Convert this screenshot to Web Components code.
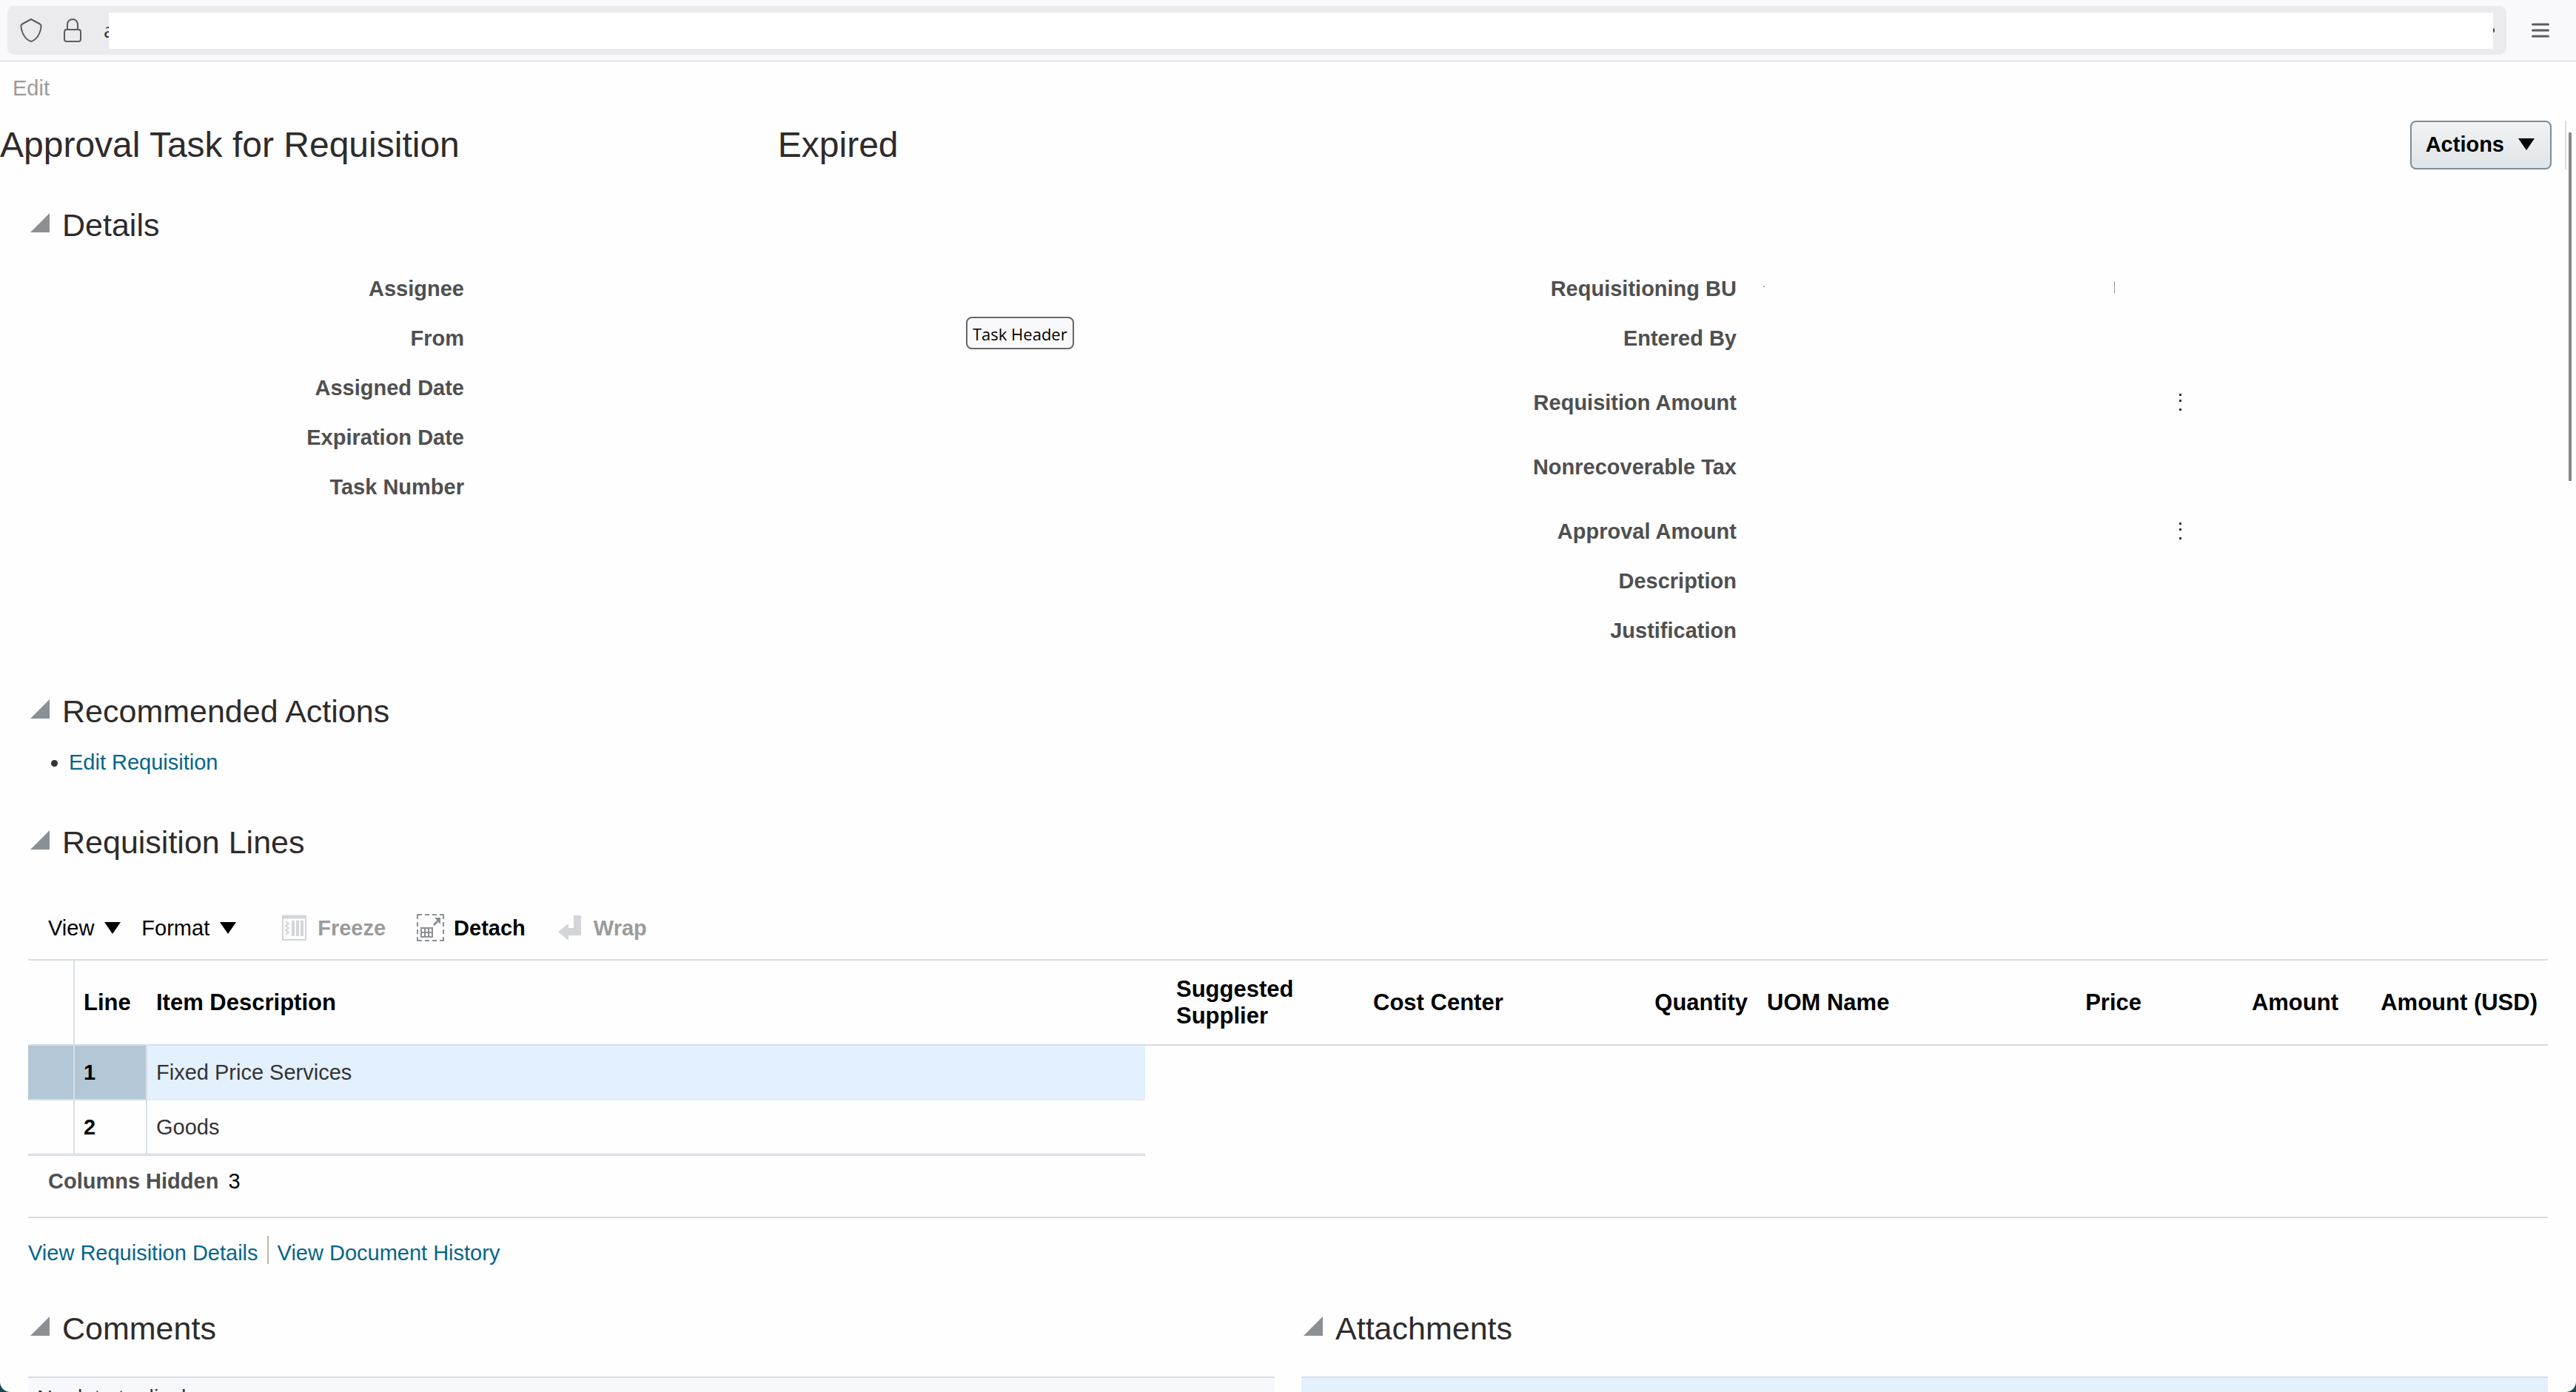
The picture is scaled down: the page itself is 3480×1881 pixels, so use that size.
<!DOCTYPE html>
<html lang="en">
<head>
<meta charset="utf-8">
<title>Approval Task for Requisition</title>
<style>
	html {
		height: 100%;
		background: #17474f;
	}
	body {
		margin: 0;
		height: 100%;
		font: 29px/36px "Liberation Sans", Arial, sans-serif;
		color: #333;
	}
</style>
</head>
<body>
<approval-page></approval-page>

<script>
/**
 * Small helper: attaches an open shadow root with styles and markup
 */
class BaseElement extends HTMLElement {
	render(html) {
		this.attachShadow({ mode: 'open' }).innerHTML = `
			<style>
				* { box-sizing: border-box; }
				button, input { font: inherit; color: inherit; margin: 0; padding: 0; border: none; background: none; }
				a { color: #06658a; text-decoration: none; }
			</style>
			${html}
		`;
	}
}

/**
 * Browser toolbar with the address field
 */
class BrowserBar extends BaseElement {
	connectedCallback() {
		this.render(`
			<style>
				:host {
					display: flex;
					align-items: center;
					gap: 34px;
					height: 83px;
					box-sizing: border-box;
					padding: 0 36px 0 10px;
					background: #f9f9fb;
					border-bottom: 1px solid #c9c9cd;
				}
				.field {
					flex: 1;
					display: flex;
					align-items: center;
					height: 66px;
					padding: 0 16px 0 17px;
					background: #ebebed;
					border-radius: 9px;
				}
				.lock { margin: 0 29px 0 28px; }
				.start {
					width: 7px;
					white-space: nowrap;
					font: 27px/36px "Open Sans", sans-serif;
				}
				/* the field lies over the end of the address */
				input {
					position: relative;
					flex: 1;
					height: 49px;
					background: #fff;
				}
				.end {
					width: 2px;
					height: 6px;
					background: #4a4a50;
					border-radius: 0 2px 2px 0;
				}
				svg { display: block; }
			</style>
			<div class="field">
				<svg width="30" height="34" viewBox="0 0 30 34" fill="none" stroke="#5b5b60" stroke-width="2" stroke-linejoin="round">
					<path d="M15 2 L27 8.500 Q29 9.500 28.500 12 C27.500 22 22 30 15 32 C8 30 2.500 22 1.500 12 Q1 9.500 3 8.500 Z"/>
				</svg>
				<svg class="lock" width="26" height="34" viewBox="0 0 26 34" fill="none" stroke="#5b5b60" stroke-width="2">
					<rect x="2" y="16" width="22" height="16" rx="3"/>
					<path d="M6 16 V9 a7 7 0 0 1 14 0 V16"/>
				</svg>
				<span class="start">a</span>
				<input type="text" aria-label="Address">
				<span class="end"></span>
			</div>
			<button aria-label="Open application menu">
				<svg width="24" height="20" viewBox="0 0 24 20" stroke="#5b5b60" stroke-width="3" stroke-linecap="round">
					<path d="M1.500 2 H22.500 M1.500 10 H22.500 M1.500 18 H22.500"/>
				</svg>
			</button>
		`);
	}
}

/**
 * Page title row with status and the actions slot
 */
class PageTitle extends BaseElement {
	connectedCallback() {
		this.render(`
			<style>
				:host {
					display: flex;
					align-items: center;
					height: 82px;
				}
				h1 {
					flex: 1;
					display: flex;
					gap: 430px;
					margin: 0;
					font-size: 48px;
					font-weight: normal;
					line-height: 56px;
					color: #2f2b2a;
				}
				.edge {
					width: 2px;
					height: 66px;
					margin: 0 13px 0 18px;
					background: #d6dfe6;
				}
			</style>
			<h1><span>${this.getAttribute('heading')}</span><span>${this.getAttribute('status')}</span></h1>
			<slot></slot>
			<div class="edge"></div>
		`);
	}
}

/**
 * Button that opens a menu, plain or boxed
 */
class MenuButton extends BaseElement {
	connectedCallback() {
		this.render(`
			<style>
				:host { display: block; }
				button {
					display: flex;
					align-items: center;
					gap: 14px;
					color: #000;
				}
				:host([boxed]) button {
					gap: 19px;
					height: 66px;
					padding: 0 21px 2px 19px;
					border: 2px solid #7b8d9b;
					border-radius: 8px;
					background: linear-gradient(#f1f2f4, #e0e5e8);
					font-weight: bold;
				}
				svg { display: block; }
			</style>
			<button aria-haspopup="true"><slot></slot>
				<svg width="22" height="16" viewBox="0 0 22 16"><path d="M0 0 H22 L11 16 Z"/></svg>
			</button>
		`);
	}
}

/**
 * Section with a disclosure triangle
 */
class DisclosureSection extends BaseElement {
	connectedCallback() {
		this.render(`
			<style>
				:host { display: block; }
				h2 {
					display: flex;
					align-items: center;
					gap: 17px;
					height: 64px;
					margin: 0;
					padding-left: 3px;
					font-size: 43px;
					font-weight: normal;
					line-height: 52px;
					color: #2f2b2a;
				}
				svg {
					display: block;
					margin-bottom: 6px;
				}
			</style>
			<h2>
				<button aria-label="Collapse ${this.getAttribute('heading')}" aria-expanded="true">
					<svg width="26" height="26" viewBox="0 0 26 26"><path d="M26 0 V26 H0 Z" fill="#8b9094"/></svg>
				</button>
				${this.getAttribute('heading')}
			</h2>
			<slot></slot>
		`);
	}
}

/**
 * One label and value row of a form
 */
class FieldRow extends BaseElement {
	connectedCallback() {
		this.render(`
			<style>
				:host {
					display: grid;
					grid-template-columns: var(--label-width) 1fr;
					align-items: center;
					box-sizing: border-box;
					height: 67px;
				}
				:host([spaced]) {
					height: 87px;
					padding-top: 20px;
				}
				.label {
					text-align: right;
					font-weight: bold;
					color: #4f4f4f;
				}
				.value {
					display: flex;
					align-items: center;
					padding-left: 36px;
				}
			</style>
			<span class="label">${this.getAttribute('label')}</span>
			<span class="value"><slot></slot></span>
		`);
	}
}

/**
 * Toolbar button with an icon
 */
const TOOL_ICONS = {
	freeze: `
		<g fill="none" stroke="#d3d5d8">
			<rect x="3" y="3" width="31" height="32" stroke-width="2"/>
			<path d="M2 4 H35" stroke-width="5"/>
			<path d="M7 10 l4 3 -4 3 4 3 -4 3 4 3 -4 3" stroke-width="2"/>
			<path d="M17 9 V30 M23 9 V30 M29 9 V30" stroke-width="4"/>
		</g>`,
	detach: `
		<g fill="none" stroke="#8d9094" stroke-width="2">
			<path d="M1 7 V1 H7 M11 1 H17 M21 1 H27 M31 1 H36 V7 M36 11 V17 M36 21 V27 M36 31 V36 H31 M27 36 H21 M17 36 H11 M7 36 H1 V31 M1 27 V21 M1 17 V11"/>
			<path d="M6 19 H21 V31 H6 Z M6 25 H21 M11 19 V31 M16 19 V31"/>
			<path d="M23 15 L30 8" stroke-width="3"/>
		</g>
		<path d="M24 5 H32 V14 Z" fill="#8d9094"/>`,
	wrap: `<path d="M23 2 H33 V29 H16 V36 L2 24 L16 13 V19 H23 Z" fill="#d3d5d8"/>`
};

class ToolButton extends BaseElement {
	connectedCallback() {
		this.render(`
			<style>
				:host { display: block; }
				button {
					display: flex;
					align-items: center;
					gap: 12px;
					font-weight: bold;
					color: #000;
				}
				button:disabled { color: #9b9b9b; }
				svg { display: block; }
			</style>
			<button ${this.hasAttribute('disabled') ? 'disabled' : ''}>
				<svg width="38" height="38" viewBox="0 0 38 38">${TOOL_ICONS[this.getAttribute('icon')]}</svg>
				<slot></slot>
			</button>
		`);
	}
}

/**
 * Requisition lines table
 */
const LINES = [
	{ line: 1, item: 'Fixed Price Services', selected: true },
	{ line: 2, item: 'Goods' }
];

class RequisitionTable extends BaseElement {
	connectedCallback() {
		const rows = LINES.map(row => `
			<tr class="${row.selected ? 'selected' : ''}">
				<td class="grip"></td>
				<th class="line" scope="row">${row.line}</th>
				<td class="item">${row.item}</td>
				<td colspan="8" class="blank"></td>
			</tr>
		`).join('');

		this.render(`
			<style>
				:host {
					display: block;
					border-top: 2px solid #d6dde3;
					border-bottom: 2px solid #d6dde3;
				}
				table {
					width: 100%;
					table-layout: fixed;
					border-collapse: separate;
					border-spacing: 0;
				}
				th, td {
					padding: 0 12px;
					text-align: left;
				}
				thead th {
					height: 115px;
					border-bottom: 2px solid #d6dde3;
					font-size: 31px;
					color: #000;
				}
				thead .number {
					padding-right: 14px;
					text-align: right;
				}
				tbody td, tbody th {
					height: 74px;
					border-bottom: 2px solid #e6ecf1;
				}
				.grip, tbody .line { border-right: 2px solid #d9e0e5; }
				tbody .line { color: #000; }
				.selected .item { background: #e3f0fe; }
				.selected .grip, .selected .line {
					background: #b4c7d6;
					border-bottom-color: #d6dde3;
				}
				tbody tr:last-child > * {
					height: 75px;
					padding-bottom: 2px;
					border-bottom-color: #d6dde3;
					box-shadow: inset 0 -2px #e6ecf1;
				}
				tbody tr > .blank {
					border: none;
					box-shadow: none;
				}
				.hidden {
					display: flex;
					gap: 13px;
					height: 82px;
					padding: 16px 27px 0;
					color: #000;
				}
				.hidden b { color: #4f4f4f; }
			</style>
			<table>
				<colgroup>
					<col style="width: 63px"><col style="width: 98px"><col><col style="width: 30px">
					<col span="6" style="width: 266px"><col style="width: 269px">
				</colgroup>
				<thead>
					<tr>
						<th class="grip"></th>
						<th scope="col">Line</th>
						<th scope="col" colspan="2">Item Description</th>
						<th scope="col">Suggested<br>Supplier</th>
						<th scope="col">Cost Center</th>
						<th scope="col" class="number">Quantity</th>
						<th scope="col">UOM Name</th>
						<th scope="col" class="number">Price</th>
						<th scope="col" class="number">Amount</th>
						<th scope="col" class="number">Amount (USD)</th>
					</tr>
				</thead>
				<tbody>${rows}</tbody>
			</table>
			<div class="hidden"><b>Columns Hidden</b><span>3</span></div>
		`);
	}
}

/**
 * Framed list body under Comments and Attachments
 */
class ListPanel extends BaseElement {
	connectedCallback() {
		this.render(`
			<style>
				:host {
					display: block;
					height: 56px;
					box-sizing: border-box;
					margin-top: 33px;
					padding: 9px 12px;
					border-top: 2px solid #d3dee4;
					background: #f7f8fc;
				}
				:host([selected]) { background: #e3f0fe; }
			</style>
			<slot></slot>
		`);
	}
}

/**
 * Floating hint
 */
class ToolTip extends BaseElement {
	connectedCallback() {
		this.render(`
			<style>
				:host {
					box-sizing: border-box;
					height: 44px;
					padding: 0 7px;
					border: 2px solid #66666b;
					border-radius: 8px;
					background: #f9f9fb;
					font: 22px/42px "Open Sans", sans-serif;
					color: #000;
					white-space: nowrap;
				}
			</style>
			<slot></slot>
		`);
	}
}

/**
 * The whole page
 */
class ApprovalPage extends BaseElement {
	connectedCallback() {
		const dots = `
			<svg class="dots" width="4" height="24" viewBox="0 0 4 24" fill="#333">
				<rect width="3" height="3"/><rect y="8" width="3" height="3"/><rect y="20" width="3" height="3"/>
			</svg>`;

		this.render(`
			<style>
				:host {
					display: block;
					position: relative;
					height: 100%;
					overflow: hidden;
					background: #fefefe;
					border-radius: 0 0 14px 14px;
				}
				.menu {
					padding: 18px 17px;
					color: #9b9b9b;
				}
				main { padding: 35px 38px 0; }
				.fields {
					display: grid;
					grid-template-columns: 1fr 1fr;
					margin: 0 4px 44px -38px;
					padding-top: 20px;
					--label-width: 627px;
				}
				.tick {
					width: 2px;
					height: 2px;
					margin-bottom: 6px;
					background: #aaa;
				}
				.bar {
					width: 1px;
					height: 16px;
					margin: 0 0 4px 472px;
					background: #999;
				}
				.dots { margin-left: 562px; }
				ul {
					margin: 0 0 52px;
					padding: 19px 0 6px 55px;
				}
				.tools {
					display: flex;
					align-items: center;
					height: 126px;
					padding: 42px 27px 0;
				}
				.format { margin: 0 60px 0 28px; }
				.detach { margin: 0 42px; }
				.links {
					display: flex;
					gap: 12px;
					height: 70px;
					padding-top: 24px;
					margin-bottom: 47px;
					line-height: 46px;
				}
				.rule {
					width: 2px;
					height: 38px;
					background: #b9b8a6;
				}
				.lists {
					display: grid;
					grid-template-columns: 1fr 1fr;
					gap: 36px;
				}
				tool-tip {
					position: absolute;
					left: 1305px;
					top: 428px;
				}
				.scroll {
					position: absolute;
					top: 179px;
					right: 6px;
					width: 4px;
					height: 471px;
					border-radius: 1px;
					background: #858585;
				}
			</style>
			<browser-bar></browser-bar>
			<div class="menu">Edit</div>
			<page-title heading="Approval Task for Requisition" status="Expired">
				<menu-button boxed>Actions</menu-button>
			</page-title>
			<main>
				<disclosure-section heading="Details">
					<div class="fields">
						<div>
							<field-row label="Assignee"></field-row>
							<field-row label="From"></field-row>
							<field-row label="Assigned Date"></field-row>
							<field-row label="Expiration Date"></field-row>
							<field-row label="Task Number"></field-row>
						</div>
						<div>
							<field-row label="Requisitioning BU"><i class="tick"></i><i class="bar"></i></field-row>
							<field-row label="Entered By"></field-row>
							<field-row label="Requisition Amount" spaced>${dots}</field-row>
							<field-row label="Nonrecoverable Tax" spaced></field-row>
							<field-row label="Approval Amount" spaced>${dots}</field-row>
							<field-row label="Description"></field-row>
							<field-row label="Justification"></field-row>
						</div>
					</div>
				</disclosure-section>
				<disclosure-section heading="Recommended Actions">
					<ul><li><a href="#edit">Edit Requisition</a></li></ul>
				</disclosure-section>
				<disclosure-section heading="Requisition Lines">
					<div class="tools">
						<menu-button>View</menu-button>
						<menu-button class="format">Format</menu-button>
						<tool-button icon="freeze" disabled>Freeze</tool-button>
						<tool-button icon="detach" class="detach">Detach</tool-button>
						<tool-button icon="wrap" disabled>Wrap</tool-button>
					</div>
					<requisition-table></requisition-table>
					<nav class="links">
						<a href="#details">View Requisition Details</a>
						<span class="rule"></span>
						<a href="#history">View Document History</a>
					</nav>
				</disclosure-section>
				<div class="lists">
					<disclosure-section heading="Comments">
						<list-panel>No data to display.</list-panel>
					</disclosure-section>
					<disclosure-section heading="Attachments">
						<list-panel selected></list-panel>
					</disclosure-section>
				</div>
			</main>
			<tool-tip role="tooltip">Task Header</tool-tip>
			<div class="scroll"></div>
		`);
	}
}

customElements.define('browser-bar', BrowserBar);
customElements.define('page-title', PageTitle);
customElements.define('menu-button', MenuButton);
customElements.define('disclosure-section', DisclosureSection);
customElements.define('field-row', FieldRow);
customElements.define('tool-button', ToolButton);
customElements.define('requisition-table', RequisitionTable);
customElements.define('list-panel', ListPanel);
customElements.define('tool-tip', ToolTip);
customElements.define('approval-page', ApprovalPage);
</script>
</body>
</html>
